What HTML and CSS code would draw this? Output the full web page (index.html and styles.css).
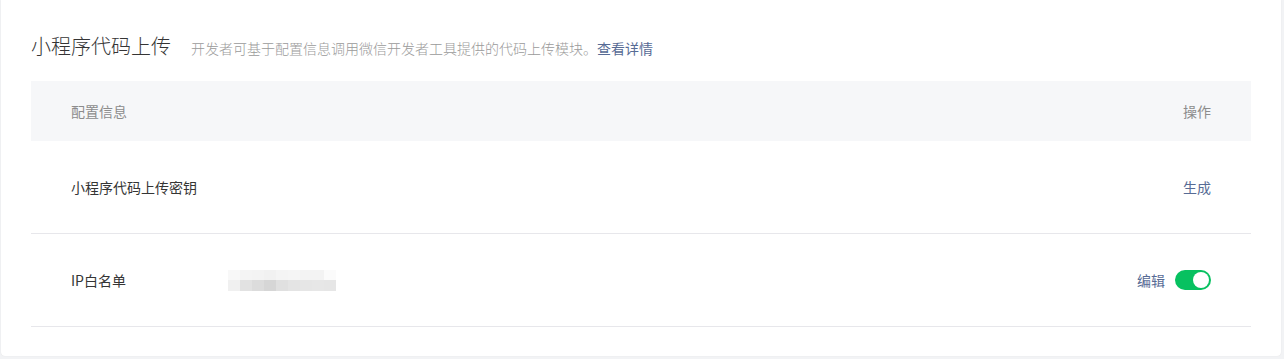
FILE: index.html
```html
<!DOCTYPE html>
<html lang="zh-CN">
<head>
<meta charset="utf-8">
<link rel="stylesheet" href="styles.css">
</head>
<body>
<div class="page">
  <div class="card">
    <div class="head">
      <h2 class="title">小程序代码上传</h2>
      <span class="desc">开发者可基于配置信息调用微信开发者工具提供的代码上传模块。<a class="link">查看详情</a></span>
    </div>
    <div class="table">
      <div class="row thead">
        <div class="cell-name">配置信息</div>
        <div class="cell-act">操作</div>
      </div>
      <div class="row body">
        <div class="cell-name">小程序代码上传密钥</div>
        <div class="cell-act"><a class="link">生成</a></div>
      </div>
      <div class="row body">
        <div class="cell-name">IP白名单</div>
        <div class="cell-val"><span class="blur"><i class="b1"></i><i class="b2"></i><i class="b3"></i><i class="b4"></i><i class="b5"></i><i class="b6"></i><i class="b7"></i><i class="b8"></i><i class="b9"></i></span></div>
        <div class="cell-act"><a class="link">编辑</a><span class="switch"><span class="knob"></span></span></div>
      </div>
    </div>
  </div>
</div>
</body>
</html>
```
FILE: styles.css
```css
html, body {
  margin: 0;
  padding: 0;
  background: #f2f3f5;
  font-family: "Noto Sans CJK SC", "Noto Sans", sans-serif;
}
.page {
  padding: 0 3px 3px 1px;
}
.card {
  background: #fff;
  border-radius: 0 0 4px 4px;
  box-shadow: 0 0 1px rgba(0,0,0,0.12);
  padding: 0 30px 29px 30px;
}
.head {
  display: flex;
  align-items: baseline;
  height: 81px;
  padding-top: 30px;
  box-sizing: border-box;
}
.title {
  margin: 0;
  font-size: 20px;
  font-weight: 300;
  color: #353535;
  line-height: 32px;
}
.desc {
  margin-left: 20px;
  font-size: 14px;
  font-weight: 300;
  color: #9a9a9a;
}
.link {
  color: #576b95;
  text-decoration: none;
  font-weight: 400;
}
.row {
  display: flex;
  align-items: center;
  padding: 0 40px;
  font-size: 14px;
  color: #353535;
}
.thead {
  height: 60px;
  background: #f6f7f9;
  color: #8c8c8c;
}
.body {
  height: 92px;
  border-bottom: 1px solid #e7e7eb;
}
.cell-name {
  width: 157px;
}
.cell-val {
  flex: 1;
}
.cell-act {
  margin-left: auto;
  display: flex;
  align-items: center;
}
.blur {
  display: flex;
  flex-wrap: wrap;
  width: 108px;
  height: 21px;
}
.blur i {
  display: block;
  width: 12px;
  height: 21px;
}
.b1 { background: linear-gradient(#f8f8f8 50%, #f0f0f0 50%); }
.b2 { background: linear-gradient(#f4f4f4 50%, #e2e2e2 50%); }
.b3 { background: linear-gradient(#f3f3f3 50%, #dcdcdc 50%); }
.b4 { background: linear-gradient(#f1f1f1 50%, #d6d6d6 50%); }
.b5 { background: linear-gradient(#f4f4f4 50%, #e0e0e0 50%); }
.b6 { background: linear-gradient(#f5f5f5 50%, #e4e4e4 50%); }
.b7 { background: linear-gradient(#f3f3f3 50%, #e6e6e6 50%); }
.b8 { background: linear-gradient(#f3f3f3 50%, #e7e7e7 50%); }
.b9 { background: linear-gradient(#fbfbfb 50%, #e6e6e6 50%); }
.switch {
  margin-left: 10px;
  width: 36px;
  height: 20px;
  border-radius: 10px;
  background: #07c160;
  display: flex;
  align-items: center;
  justify-content: flex-end;
  padding: 0 2px;
  box-sizing: border-box;
}
.knob {
  width: 16px;
  height: 16px;
  border-radius: 50%;
  background: #fff;
}
```
